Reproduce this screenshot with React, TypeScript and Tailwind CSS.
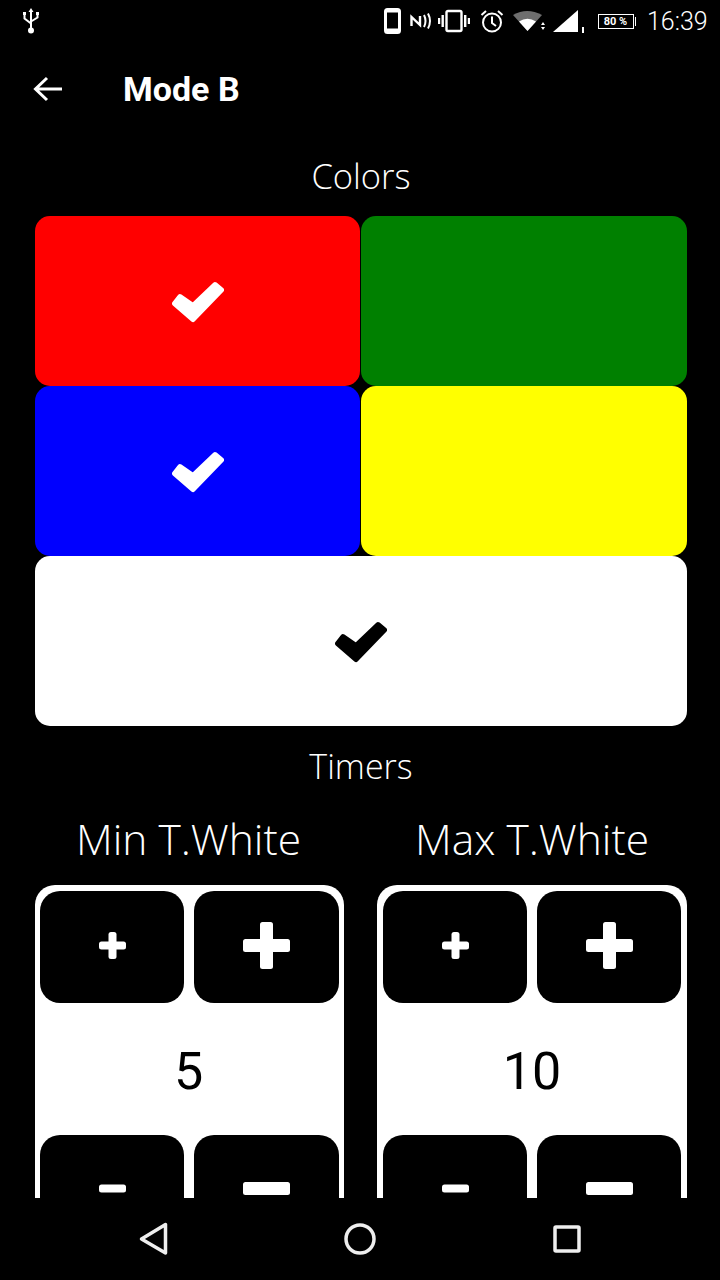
function Check({ className }: { className: string }) {
  return (
    <svg width="52" height="44" viewBox="0 0 52 44" className={className}>
      <path
        d="M2.5 24.5L8 17.5L21 26.5L43 5.5L49.5 11L21 40.5Z"
        fill="currentColor"
        stroke="currentColor"
        strokeWidth="5"
        strokeLinejoin="round"
      />
    </svg>
  );
}

function ColorTile({ bg, check, wide }: { bg: string; check?: string; wide?: boolean }) {
  return (
    <div className={`${bg} ${wide ? "col-span-2" : ""} h-[170px] rounded-[15px] flex items-center justify-center`}>
      {check && <Check className={check} />}
    </div>
  );
}

function Glyph({ big, minus }: { big?: boolean; minus?: boolean }) {
  const s = big ? 47 : 27;
  const t = big ? 13 : 8;
  return (
    <svg width={s} height={s} viewBox={`0 0 ${s} ${s}`} className="text-white">
      <rect x="0" y={(s - t) / 2} width={s} height={t} rx="2.5" fill="currentColor" />
      {!minus && <rect x={(s - t) / 2} y="0" width={t} height={s} rx="2.5" fill="currentColor" />}
    </svg>
  );
}

function StepButton({ big, minus }: { big?: boolean; minus?: boolean }) {
  return (
    <div
      className={`${big ? "flex-1" : "w-[144px]"} ${minus ? "pb-[6px]" : "pb-[4px]"} h-[112px] bg-black rounded-[20px] flex items-center justify-center`}
    >
      <Glyph big={big} minus={minus} />
    </div>
  );
}

function Timer({ title, value, width, pad, nudge }: { title: string; value: string; width: string; pad: string; nudge?: string }) {
  return (
    <div className={width}>
      <div className={`h-[60px] pb-[4px] flex items-center justify-center text-[42.5px] font-light text-white font-['Open_Sans',sans-serif] ${nudge ?? ""}`}>
        {title}
      </div>
      <div className={`mt-[14px] bg-white rounded-t-[20px] pt-[6px] h-[400px] ${pad}`}>
        <div className="flex gap-[10px]">
          <StepButton />
          <StepButton big />
        </div>
        <div className={`h-[132px] pt-[5px] flex items-center justify-center text-[52px] text-black font-['Roboto',sans-serif] ${nudge ?? ""}`}>
          {value}
        </div>
        <div className="flex gap-[10px]">
          <StepButton minus />
          <StepButton big minus />
        </div>
      </div>
    </div>
  );
}

function StatusBar() {
  return (
    <div className="h-12 pb-[6px] flex items-center pl-[22px] pr-[13px] text-white">
      {/* usb */}
      <svg width="18" height="26" viewBox="0 0 18 26" fill="none" stroke="currentColor" strokeWidth="2">
        <path d="M9 2V22M2.5 6V10.5L9 15.5M15.5 6V9.5L9 13.5" />
        <circle cx="9" cy="22.5" r="3" fill="currentColor" stroke="none" />
        <path d="M9 0L6.5 4H11.5Z" fill="currentColor" stroke="none" />
        <rect x="1" y="4" width="3" height="3" fill="currentColor" stroke="none" />
        <rect x="14" y="4" width="3" height="3" fill="currentColor" stroke="none" />
      </svg>
      <div className="ml-auto flex items-center">
        {/* device */}
        <svg width="17" height="26" viewBox="0 0 17 26" fill="none">
          <rect x="1.5" y="1.5" width="14" height="23" rx="2" stroke="white" strokeWidth="3" />
          <rect x="1" y="1" width="15" height="3.5" fill="white" />
          <rect x="1" y="20.5" width="15" height="4.5" fill="white" />
        </svg>
        {/* nfc */}
        <svg width="24" height="18" viewBox="0 0 24 18" fill="none" stroke="white" strokeWidth="2" className="ml-[9px]">
          <path d="M1.5 14V5L10 13V4" strokeWidth="2.4" />
          <path d="M14 3Q17 9 14 15M18 1.5Q22 9 18 16.5" />
        </svg>
        {/* vibrate */}
        <svg width="32" height="24" viewBox="0 0 32 24" fill="none" className="ml-[4px]">
          <rect x="8.5" y="2" width="15" height="20" rx="1.5" stroke="white" strokeWidth="2.4" />
          <rect x="3.5" y="6" width="2.4" height="12" fill="white" />
          <rect x="0" y="9" width="2.2" height="6" fill="white" />
          <rect x="26" y="6" width="2.4" height="12" fill="white" />
          <rect x="29.8" y="9" width="2.2" height="6" fill="white" />
        </svg>
        {/* alarm */}
        <svg width="24" height="24" viewBox="0 0 24 24" fill="none" stroke="white" strokeWidth="2" className="ml-[10px]">
          <circle cx="12" cy="13.5" r="9" />
          <path d="M12 7.5V14L16 17M1.5 6L6 2M22.5 6L18 2" />
        </svg>
        {/* wifi */}
        <svg width="33" height="22" viewBox="0 0 33 22" className="ml-[9px]">
          <path d="M0 5Q14 -3 29 5L14.5 21Z" fill="#6e6e6e" />
          <path d="M6 11.5Q14.5 6 23 11.5L14.5 21Z" fill="white" />
          <path d="M30 12L32 15H28ZM30 20L28 17H32Z" fill="white" />
        </svg>
        {/* signal */}
        <svg width="32" height="24" viewBox="0 0 32 24" className="ml-[7px]">
          <path d="M0 23L25 1V23Z" fill="white" />
          <rect x="29" y="18" width="2" height="6" fill="white" />
        </svg>
        {/* battery */}
        <div className="ml-[13px] flex items-center">
          <div className="w-[36px] h-[15px] border-[1.5px] border-white flex items-center justify-center text-[11px] font-bold leading-none text-white font-['Roboto',sans-serif]">
            80 %
          </div>
          <div className="ml-px w-[1.5px] h-[9px] bg-white" />
        </div>
        <div className="ml-[11px] w-[60px] text-[25px] leading-none font-['Roboto',sans-serif] font-light text-right">16:39</div>
      </div>
    </div>
  );
}

function NavBar() {
  return (
    <div className="h-[82px] bg-black flex items-center justify-between pl-[139px] pr-[139px]">
      <svg width="30" height="34" viewBox="0 0 30 34" fill="none" stroke="#eeeeee" strokeWidth="3.5" strokeLinejoin="round">
        <path d="M26.5 2.5V31L2.5 17Z" />
      </svg>
      <svg width="34" height="34" viewBox="0 0 34 34" fill="none" stroke="#eeeeee" strokeWidth="3.5" className="mr-[2px]">
        <circle cx="17" cy="17" r="14" />
      </svg>
      <svg width="28" height="28" viewBox="0 0 28 28" fill="none" stroke="#eeeeee" strokeWidth="3.5" strokeLinejoin="round">
        <rect x="2" y="2" width="24" height="24" rx="1" />
      </svg>
    </div>
  );
}

export default function App() {
  return (
    <div className="w-[720px] h-[1280px] bg-black flex flex-col overflow-hidden font-['Open_Sans',sans-serif]">
      <StatusBar />
      <div className="h-[82px] flex items-center pl-[32px]">
        <svg width="32" height="28" viewBox="0 0 32 28" fill="none" stroke="white" strokeWidth="3">
          <path d="M30 14H4M15 3L3.5 14L15 25" />
        </svg>
        <div className="ml-[59px] text-[34px] font-bold text-white font-['Roboto',sans-serif]">Mode B</div>
      </div>
      <div className="flex-1 overflow-hidden pl-[35px] pr-[33px]">
        <div className="h-[86px] pt-[6px] flex items-center justify-center text-[34.5px] font-light text-white">Colors</div>
        <div className="grid grid-cols-[325px_326px] gap-x-px">
          <ColorTile bg="bg-[#ff0000]" check="text-white" />
          <ColorTile bg="bg-[#008000]" />
          <ColorTile bg="bg-[#0000ff]" check="text-white" />
          <ColorTile bg="bg-[#ffff00]" />
          <ColorTile bg="bg-white" check="text-black" wide />
        </div>
        <div className="h-[82px] pb-[2px] flex items-center justify-center text-[34px] font-light text-white">Timers</div>
        <div className="flex justify-between pt-[3px]">
          <Timer title="Min T.White" value="5" width="w-[309px]" pad="px-[5px]" nudge="pr-[2px]" />
          <Timer title="Max T.White" value="10" width="w-[310px]" pad="px-[6px]" />
        </div>
      </div>
      <NavBar />
    </div>
  );
}
